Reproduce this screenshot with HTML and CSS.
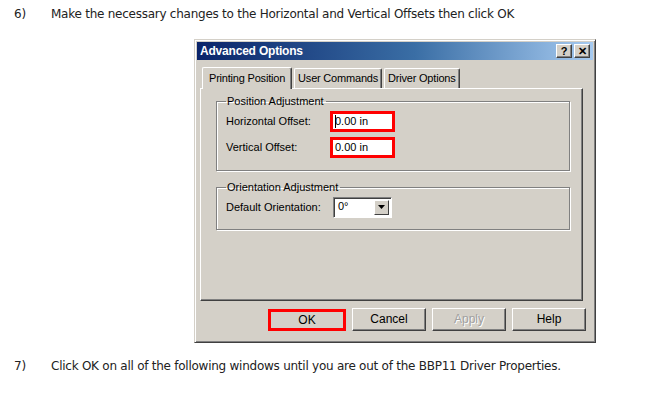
FILE: index.html
```html
<!DOCTYPE html>
<html lang="en">
<head>
<meta charset="UTF-8">
<meta name="viewport" content="width=device-width, initial-scale=1.0">
<title>Advanced Options</title>
<link rel="stylesheet" href="styles.css">
</head>
<body>
<p class="step"><span class="num">6)</span>Make the necessary changes to the Horizontal and Vertical Offsets then click OK</p>

<div class="dialog">
  <div class="titlebar">
    <span class="title">Advanced Options</span>
    <div class="tb-btns">
      <span class="tb-btn">?</span>
      <span class="tb-btn">&#x2715;</span>
    </div>
  </div>

  <div class="tabs">
    <div class="tab active">Printing Position</div>
    <div class="tab">User Commands</div>
    <div class="tab">Driver Options</div>
  </div>

  <div class="panel">
    <fieldset class="group">
      <legend>Position Adjustment</legend>
      <div class="row">
        <label>Horizontal Offset:</label>
        <div class="mark"><div class="field"><span class="caret"></span>0.00 in</div></div>
      </div>
      <div class="row">
        <label>Vertical Offset:</label>
        <div class="mark"><div class="field">0.00 in</div></div>
      </div>
    </fieldset>

    <fieldset class="group orient">
      <legend>Orientation Adjustment</legend>
      <div class="row">
        <label>Default Orientation:</label>
        <div class="combo">
          <span class="combo-val">0&deg;</span>
          <span class="combo-btn"><svg width="7" height="4" viewBox="0 0 7 4"><path d="M0 0h7L3.5 4z" fill="#000"/></svg></span>
        </div>
      </div>
    </fieldset>
  </div>

  <div class="buttons">
    <div class="mark ok-mark"><div class="btn">OK</div></div>
    <div class="btn">Cancel</div>
    <div class="btn disabled">Apply</div>
    <div class="btn">Help</div>
  </div>
</div>

<p class="step last"><span class="num">7)</span>Click OK on all of the following windows until you are out of the BBP11 Driver Properties.</p>
</body>
</html>
```

FILE: styles.css
```css
body {
  margin: 0;
  background: #fff;
  font-family: "DejaVu Sans", sans-serif;
  color: #222;
}
.step {
  margin: 0;
  padding: 7px 0 0 14px;
  font-size: 12px;
  line-height: 14px;
  letter-spacing: -0.25px;
}
.step .num {
  display: inline-block;
  width: 37px;
}
.step.last {
  padding-top: 16px;
}

/* dialog window */
.dialog {
  margin: 18px 0 0 194px;
  width: 396px;
  height: 298px;
  background: #d4d0c8;
  border: 1px solid;
  border-color: #d4d0c8 #404040 #404040 #d4d0c8;
  box-shadow: inset 1px 1px #fff, inset -1px -1px #808080;
  padding: 2px;
  box-sizing: content-box;
  font-family: "Liberation Sans", Arial, sans-serif;
  font-size: 11px;
  color: #000;
}
.titlebar {
  height: 18px;
  display: flex;
  align-items: center;
  justify-content: space-between;
  padding: 0 3px 0 3px;
  background: linear-gradient(to right, #0a246a 0%, #3a6ea5 55%, #a6caf0 100%);
}
.title {
  color: #fff;
  font-weight: bold;
  font-family: "Liberation Sans", Arial, sans-serif;
  font-size: 12px;
  letter-spacing: -0.2px;
}
.tb-btns {
  display: flex;
  gap: 2px;
}
.tb-btn {
  width: 14px;
  height: 12px;
  background: #d4d0c8;
  border: 1px solid;
  border-color: #fff #404040 #404040 #fff;
  box-shadow: inset -1px -1px #808080;
  font-size: 11px;
  font-weight: bold;
  line-height: 12px;
  text-align: center;
}

/* tabs */
.tabs {
  display: flex;
  align-items: flex-end;
  height: 28px;
  padding-left: 5px;
}
.tab {
  height: 19px;
  line-height: 19px;
  padding: 0 3px;
  margin-right: 2px;
  border: 1px solid #fff;
  border-right-color: #404040;
  border-bottom: none;
  box-shadow: inset -1px 0 #808080;
  border-radius: 2px 2px 0 0;
  letter-spacing: -0.2px;
}
.tab.active {
  height: 21px;
  line-height: 20px;
  margin-bottom: -1px;
  background: #d4d0c8;
  position: relative;
  z-index: 1;
  padding: 0 6px;
}

.panel {
  margin-left: 3px;
  width: 383px;
  height: 213px;
  border: 1px solid;
  border-color: #fff #404040 #404040 #fff;
  box-shadow: inset -1px -1px #808080;
  padding: 6px 0 0 15px;
  box-sizing: border-box;
}

/* group boxes */
.group {
  width: 354px;
  margin: 0;
  padding: 0 9px 10px;
  border: 1px solid #808080;
  box-shadow: 1px 1px #fff, inset 1px 1px #fff;
  box-sizing: border-box;
}
.group legend {
  padding: 0 2px 0 1px;
  margin-left: 0;
  line-height: 13px;
}
.group.orient {
  margin-top: 10px;
  padding-bottom: 9px;
}
.row {
  display: flex;
  align-items: center;
  height: 26px;
}
.row label {
  width: 104px;
}
.mark {
  border: 3px solid #f00;
}
.field {
  width: 57px;
  height: 15px;
  line-height: 15px;
  background: #fff;
  padding-left: 2px;
  position: relative;
}
.caret {
  position: absolute;
  left: 2px;
  top: 1px;
  width: 1px;
  height: 13px;
  background: #000;
}

/* combo */
.combo {
  margin-left: 3px;
  width: 57px;
  height: 19px;
  display: flex;
  background: #fff;
  border: 1px solid;
  border-color: #808080 #fff #fff #808080;
  box-shadow: inset 1px 1px #404040;
}
.combo-val {
  flex: 1;
  padding: 2px 0 0 4px;
}
.combo-btn {
  width: 15px;
  margin: 2px 2px 2px 0;
  background: #d4d0c8;
  border: 1px solid;
  border-color: #fff #404040 #404040 #fff;
  box-sizing: border-box;
  display: flex;
  align-items: center;
  justify-content: center;
}

/* buttons */
.buttons {
  display: flex;
  justify-content: flex-end;
  align-items: center;
  gap: 6px;
  padding: 7px 7px 0 0;
}
.btn {
  width: 72px;
  height: 21px;
  line-height: 21px;
  text-align: center;
  background: #d4d0c8;
  border: 1px solid;
  border-color: #fff #404040 #404040 #fff;
  box-shadow: inset -1px -1px #808080;
  box-sizing: content-box;
  font-size: 12px;
}
.ok-mark .btn {
  width: 72px;
  height: 16px;
  line-height: 16px;
  border: none;
  box-shadow: none;
}
.btn.disabled {
  color: #a0a0a0;
  text-shadow: 1px 1px #fff;
}
```
